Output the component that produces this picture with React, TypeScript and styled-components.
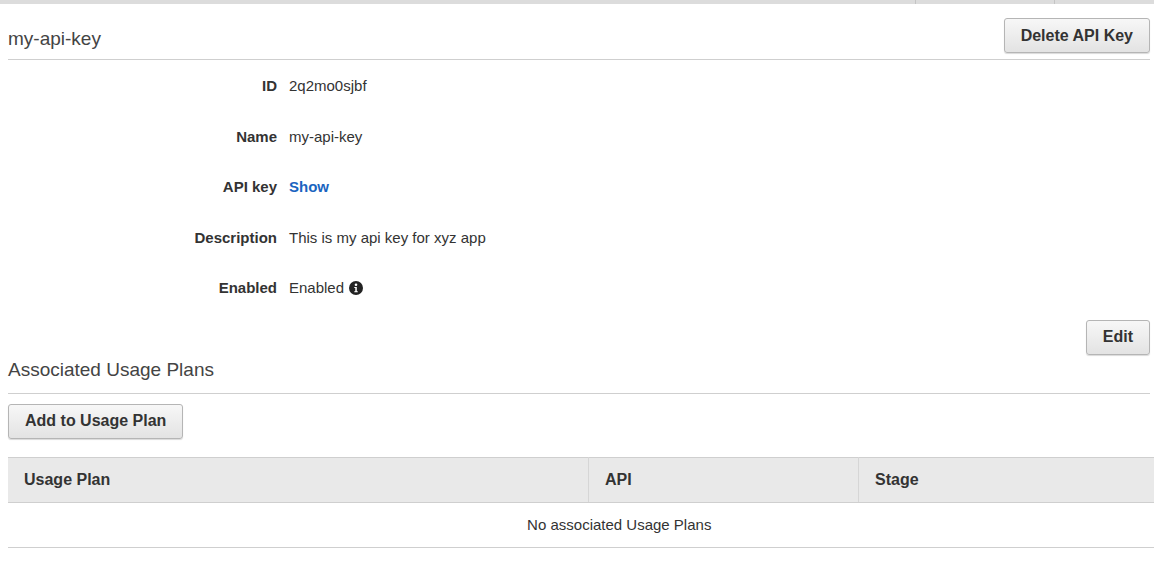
import styled, { createGlobalStyle } from "styled-components";

const Global = createGlobalStyle`
  body { margin: 0; font-family: "Liberation Sans", Arial, sans-serif; color: #333; background: #fff; }
`;

const TopStrip = styled.div`
  height: 4px;
  background: #dcdcdc;
  display: flex;
  justify-content: flex-end;
`;
const StripDivider = styled.div<{ $w: number }>`
  width: ${(p) => p.$w}px;
  border-left: 1px solid #c4c4c4;
`;

const Page = styled.div`
  padding: 0 4px 0 8px;
`;

const SectionHeader = styled.div<{ $top: number; $bottom: number }>`
  display: flex;
  justify-content: space-between;
  align-items: flex-end;
  padding-top: ${(p) => p.$top}px;
  padding-bottom: ${(p) => p.$bottom}px;
  border-bottom: 1px solid #cfcfcf;
`;

const Title = styled.h2`
  margin: 0;
  font-size: 19px;
  font-weight: normal;
  color: #444;
  line-height: 24px;
`;

const Button = styled.button`
  font-family: "Liberation Sans", Arial, sans-serif;
  font-weight: bold;
  font-size: 16px;
  color: #333;
  height: 35px;
  padding: 0 16px;
  border: 1px solid #b5b5b5;
  border-radius: 3px;
  background: linear-gradient(#f7f7f7, #e3e3e3);
  box-shadow: 0 1px 1px rgba(0, 0, 0, 0.15);
`;

const Details = styled.dl`
  margin: 0;
  padding-top: 1px;
  display: grid;
  grid-template-columns: 269px 1fr;
  grid-auto-rows: 50.5px;
  align-items: center;
  column-gap: 12px;
`;
const Label = styled.dt`
  text-align: right;
  font-weight: bold;
  font-size: 15px;
  line-height: 24px;
`;
const Value = styled.dd`
  margin: 0;
  font-size: 15px;
  line-height: 24px;
  display: flex;
  align-items: center;
  gap: 5px;
`;
const Link = styled.a`
  color: #1a64c0;
  font-weight: bold;
  cursor: pointer;
`;

const EditRow = styled.div`
  display: flex;
  justify-content: flex-end;
  margin-top: 6px;
`;

const AddWrap = styled.div`
  padding-top: 10px;
`;

const Table = styled.table`
  margin-top: 18px;
  width: 100%;
  table-layout: fixed;
  border-collapse: collapse;
  font-size: 15px;
`;
const Th = styled.th<{ $w: number }>`
  width: ${(p) => p.$w}px;
  height: 44px;
  background: #e9e9e9;
  text-align: left;
  font-size: 16px;
  padding: 0 16px;
  border-top: 1px solid #cfcfcf;
  border-bottom: 1px solid #cfcfcf;
  border-right: 1px solid #d6d6d6;
  &:last-child { border-right: none; padding: 0; }
`;
const Td = styled.td`
  height: 42px;
  text-align: center;
  border-bottom: 1px solid #cfcfcf;
`;

function InfoIcon() {
  return (
    <svg width="14" height="14" viewBox="0 0 14 14">
      <circle cx="7" cy="7" r="7" fill="#222" />
      <circle cx="7" cy="3.8" r="1.3" fill="#fff" />
      <path d="M5.3 6h2.5v4.2h1v1.1H5.3v-1.1h1V7.1h-1z" fill="#fff" />
    </svg>
  );
}

export default function App() {
  return (
    <>
      <Global />
      <TopStrip>
        <StripDivider $w={138} />
        <StripDivider $w={99} />
      </TopStrip>
      <Page>
        <SectionHeader $top={14} $bottom={6}>
          <Title style={{ marginBottom: 2 }}>my-api-key</Title>
          <Button>Delete API Key</Button>
        </SectionHeader>
        <Details>
          <Label>ID</Label>
          <Value>2q2mo0sjbf</Value>
          <Label>Name</Label>
          <Value>my-api-key</Value>
          <Label>API key</Label>
          <Value>
            <Link>Show</Link>
          </Value>
          <Label>Description</Label>
          <Value>This is my api key for xyz app</Value>
          <Label>Enabled</Label>
          <Value>
            Enabled <InfoIcon />
          </Value>
        </Details>
        <EditRow>
          <Button>Edit</Button>
        </EditRow>
        <SectionHeader $top={3} $bottom={11}>
          <Title>Associated Usage Plans</Title>
        </SectionHeader>
        <AddWrap>
          <Button>Add to Usage Plan</Button>
        </AddWrap>
        <Table>
          <thead>
            <tr>
              <Th $w={548}>Usage Plan</Th>
              <Th $w={237}>API</Th>
              <Th $w={339}>Stage</Th>
              <Th $w={18} />
            </tr>
          </thead>
          <tbody>
            <tr>
              <Td colSpan={3}>No associated Usage Plans</Td>
              <td />
            </tr>
          </tbody>
        </Table>
      </Page>
    </>
  );
}
